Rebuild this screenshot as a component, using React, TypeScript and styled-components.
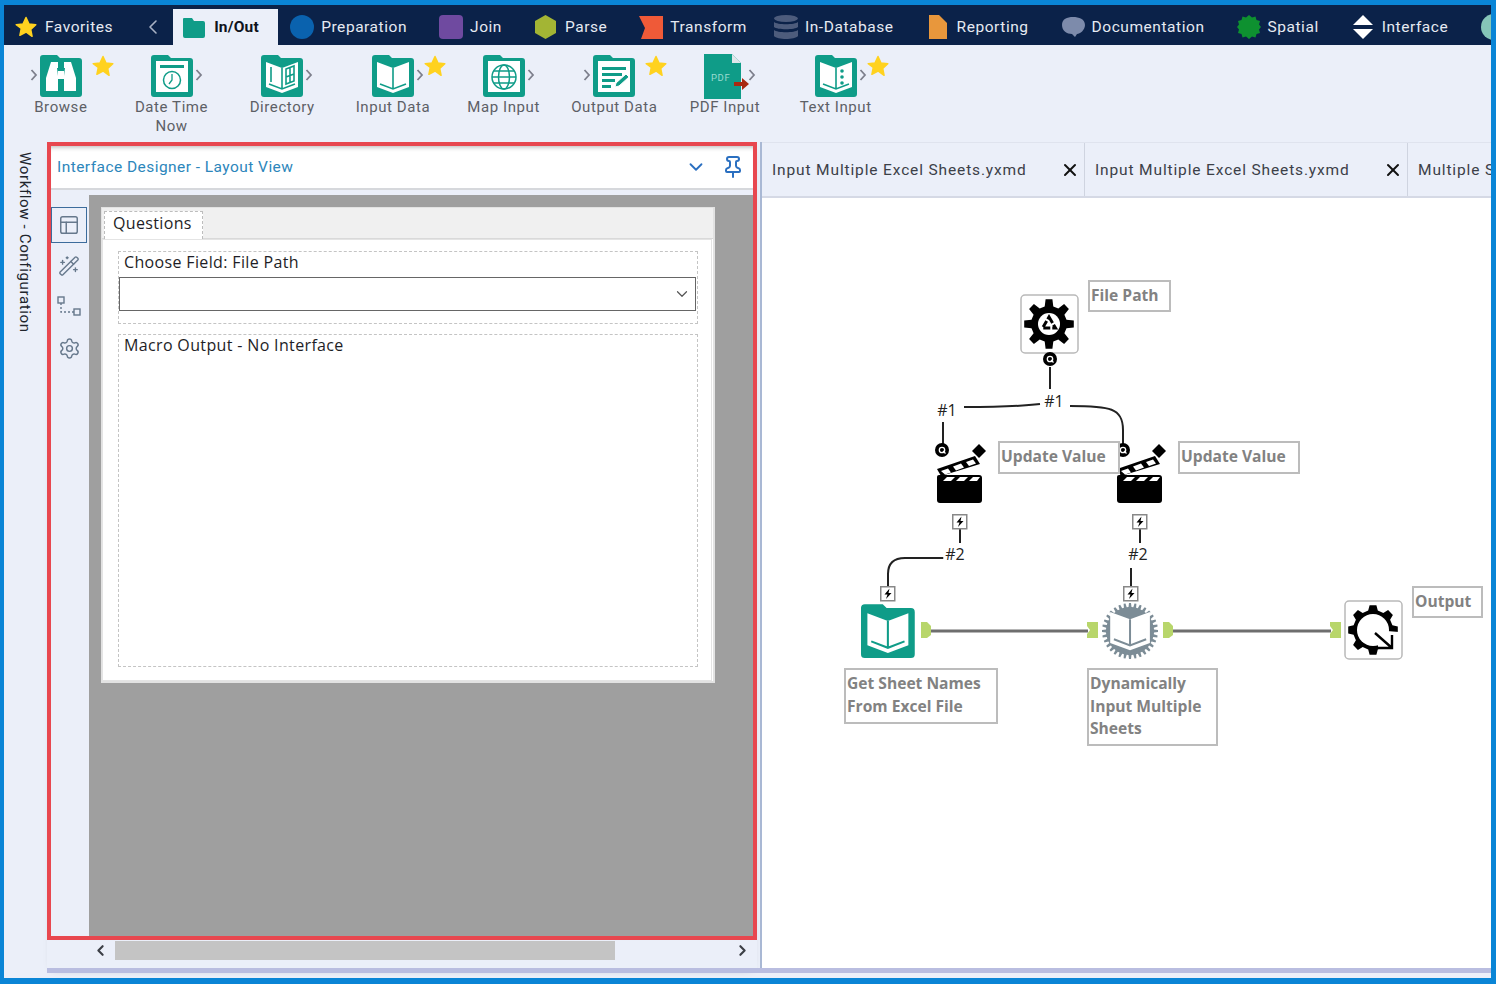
import React from "react";
import styled, { createGlobalStyle } from "styled-components";
import { PanelsTopLeft, Settings, WandSparkles, ChevronDown, ChevronLeft, ChevronRight, Pin, X } from "lucide-react";

const GlobalStyle = createGlobalStyle`
  html, body { margin: 0; padding: 0; background: #fff; }
  * { box-sizing: border-box; }
`;

const Frame = styled.div`
  width: 1496px;
  height: 984px;
  border: 5px solid #0a85d6;
  border-bottom-width: 6px;
  border-left-width: 4px;
  background: #ebeff9;
  display: flex;
  flex-direction: column;
  overflow: hidden;
  font-family: Roboto, "Liberation Sans", sans-serif;
`;

const TopNav = styled.nav`
  height: 40px;
  flex: none;
  background: #0b2249;
  display: flex;
  align-items: flex-end;
  padding-left: 10px;
  overflow: hidden;
`;

const NavItem = styled.div<{ $gap?: number }>`
  height: 36px;
  flex: none;
  display: flex;
  align-items: center;
  gap: 7px;
  margin-right: ${(p) => p.$gap ?? 32}px;
  color: #e6eaf2;
  font-size: 15.5px;
  letter-spacing: 0.55px;
  white-space: nowrap;
`;

const ActiveNavItem = styled(NavItem)`
  background: #ebeff9;
  color: #10131c;
  font-weight: 700;
  width: 105px;
  padding-left: 9px;
  gap: 8px;
  margin-right: 12px;
  letter-spacing: 0.2px;
`;

const BackChevron = styled.div`
  width: 24px;
  flex: none;
  display: flex;
  justify-content: center;
  color: #a9b2c4;
  margin: 0 8px 0 28px;
  height: 36px;
  align-items: center;
`;

const Toolbar = styled.div`
  height: 97px;
  flex: none;
  display: flex;
  padding-left: 1.5px;
`;

const Tool = styled.div`
  width: 110.7px;
  padding-top: 9px;
  display: flex;
  flex-direction: column;
  align-items: center;
  color: #5d6066;
  font-size: 15px;
  line-height: 18.5px;
  letter-spacing: 0.58px;
  text-align: center;
`;

const ToolLabel = styled.span`
  display: block;
  max-width: 90px;
`;

const ToolGlyph = styled.div`
  position: relative;
  width: 42px;
  height: 43px;
  margin-bottom: 1px;
`;

const StarBadge = styled.div`
  position: absolute;
  left: 51px;
  top: 0;
  line-height: 0;
`;

const Anchor = styled.div<{ $side: "left" | "right" }>`
  position: absolute;
  top: 14px;
  ${(p) => (p.$side === "left" ? "left: -10px;" : "right: -10px;")}
  line-height: 0;
  color: #7d7f8c;
`;

const Main = styled.div`
  flex: 1;
  min-height: 0;
  display: flex;
`;

const LeftRail = styled.div`
  width: 43px;
  flex: none;
  padding: 10px 0 0 12px;
`;

const RailLabel = styled.div`
  writing-mode: vertical-rl;
  font-size: 15px;
  letter-spacing: 0.65px;
  color: #20242c;
  white-space: nowrap;
`;

const Workspace = styled.div`
  flex: 1;
  min-width: 0;
  display: flex;
  flex-direction: column;
`;

const WorkRow = styled.div`
  flex: 1;
  min-height: 0;
  display: flex;
`;

const DesignerColumn = styled.div`
  width: 710px;
  flex: none;
  display: flex;
  flex-direction: column;
  box-shadow: 0 6px 8px -6px rgba(0, 0, 0, 0.35);
`;

const Divider = styled.div`
  width: 5px;
  flex: none;
  border-right: 2px solid #a9b8d4;
`;

const RedPanel = styled.section`
  height: 798px;
  flex: none;
  border: 4px solid #e8474f;
  display: flex;
  flex-direction: column;
  background: #ebeff9;
`;

const PanelHeader = styled.header`
  height: 44px;
  flex: none;
  background: #fff;
  border-bottom: 2px solid #d6d8dc;
  box-shadow: inset 0 5px 5px -4px rgba(0, 0, 0, 0.3);
  display: flex;
  align-items: center;
  padding: 0 6px;
  color: #2c86bb;
  font-size: 15.5px;
  letter-spacing: 0.45px;
`;

const PanelTitle = styled.div`
  flex: 1;
`;

const HeaderIcons = styled.div`
  display: flex;
  align-items: center;
  gap: 14px;
  color: #2a6fc0;
  padding-right: 2px;
`;

const PanelBody = styled.div`
  flex: 1;
  min-height: 0;
  display: flex;
  padding-top: 5px;
`;

const SideIcons = styled.div`
  width: 38px;
  flex: none;
  display: flex;
  flex-direction: column;
  align-items: center;
  padding-top: 12px;
  padding-right: 2px;
  gap: 5px;
  color: #66788c;
`;

const SideButton = styled.div<{ $active?: boolean }>`
  width: 36px;
  height: 36px;
  display: flex;
  align-items: center;
  justify-content: center;
  border: 1px solid ${(p) => (p.$active ? "#3c6c9c" : "transparent")};
`;

const GreyStage = styled.div`
  flex: 1;
  background: #9f9f9f;
  padding: 12px 38px 0 12px;
`;

const FormCard = styled.div`
  height: 476px;
  background: #fff;
  border: 1px solid #e2e2e2;
  border-right-width: 2px;
  border-bottom-width: 2px;
  display: flex;
  flex-direction: column;
  font-family: "Open Sans", "Noto Sans", sans-serif;
  font-size: 16px;
  letter-spacing: 0.35px;
  color: #1e1e26;
`;

const TabStrip = styled.div`
  height: 31px;
  flex: none;
  background: #f0f0f0;
  border-bottom: 1px solid #d9d9d9;
  padding: 3px 0 0 2px;
`;

const QuestionTab = styled.div`
  width: 99px;
  height: 28px;
  background: #fff;
  border: 1px dashed #bdbdbd;
  border-bottom: none;
  padding-left: 8px;
  line-height: 22px;
`;

const FormBody = styled.div`
  flex: 1;
  border: 1px solid #e4e4e4;
  margin-right: 1px;
  padding: 11px 13px 13px 15px;
  display: flex;
  flex-direction: column;
  gap: 10px;
`;

const DashedGroup = styled.div<{ $grow?: boolean }>`
  border: 1px dashed #c4c4c4;
  ${(p) => (p.$grow ? "flex: 1;" : "height: 73px;")}
`;

const GroupLabel = styled.div`
  padding-left: 5px;
  height: 25px;
  line-height: 21px;
`;

const SelectBox = styled.div`
  height: 34px;
  margin: 0 1px 0 0;
  border: 1.5px solid #666;
  display: flex;
  align-items: center;
  justify-content: flex-end;
  padding-right: 4px;
  color: #555;
`;

const ScrollRow = styled.div`
  height: 20px;
  flex: none;
  display: flex;
  align-items: center;
  padding-left: 45px;
  color: #3c3f46;
`;

const ScrollThumb = styled.div`
  width: 500px;
  height: 19px;
  background: #c4c4c4;
  margin-left: 6px;
  margin-right: 119px;
`;

const CanvasColumn = styled.div`
  flex: 1;
  min-width: 0;
  display: flex;
  flex-direction: column;
`;

const DocTabs = styled.div`
  height: 56px;
  flex: none;
  display: flex;
  border-bottom: 2px solid #d5d9e5;
  border-top: 1px solid #dfe3ee;
  overflow: hidden;
  font-size: 15.5px;
  letter-spacing: 0.86px;
`;

const DocTab = styled.div`
  width: 323px;
  flex: none;
  display: flex;
  align-items: center;
  justify-content: space-between;
  padding: 0 4px 0 10px;
  border-right: 1px solid #cfd4e0;
  white-space: nowrap;
  color: #3c4048;
`;

const LastDocTab = styled(DocTab)`
  width: 83px;
  border-right: none;
  padding-right: 0;
`;

const Canvas = styled.div`
  position: relative;
  flex: 1;
  background: #fff;
  overflow: hidden;
`;

const Wires = styled.svg`
  position: absolute;
  left: 0;
  top: 0;
`;

const Note = styled.div<{ $x: number; $y: number; $w: number; $h: number }>`
  position: absolute;
  left: ${(p) => p.$x - 762}px;
  top: ${(p) => p.$y - 198}px;
  width: ${(p) => p.$w}px;
  height: ${(p) => p.$h}px;
  background: #fff;
  border: 2px solid #bcbcbc;
  padding: 2px 0 0 1px;
  color: #828282;
  font-family: "Open Sans", "Noto Sans", sans-serif;
  font-weight: 700;
  font-size: 15.6px;
  line-height: 22.5px;
`;

const WireTag = styled.div<{ $x: number; $y: number }>`
  position: absolute;
  left: ${(p) => p.$x - 762}px;
  top: ${(p) => p.$y - 198}px;
  transform: translate(-50%, -50%);
  font-family: "Open Sans", "Noto Sans", sans-serif;
  font-size: 16px;
  color: #222;
  background: #fff;
  padding: 0 2px;
`;

const StatusBar = styled.div`
  height: 10px;
  flex: none;
  border-top: 5px solid #b9bde0;
`;

const TEAL = "#0f9c88";
const FOLDER = "M3 1h14l3 3h19a3 3 0 013 3v33a3 3 0 01-3 3H3a3 3 0 01-3-3V4a3 3 0 013-3z";

function Star({ size = 24 }: { size?: number }) {
  return (
    <svg width={size} height={size} viewBox="0 0 24 24">
      <path
        d="M12 2.5l2.9 6.4 6.9.8-5.1 4.700 1.400 6.900L12 17l-6.100 3.300 1.400-6.900L2.200 9.700l6.900-.8z"
        fill="#ffd21f"
        stroke="#ffd21f"
        strokeWidth="1.500"
        strokeLinejoin="round"
      />
    </svg>
  );
}

function Book({ line = TEAL, children }: { line?: string; children?: React.ReactNode }) {
  return (
    <g>
      <path d="M5 8l16 6 16-6v25l-16 6-16-6z" fill="#fff" />
      <path d="M21 14v20M8 30l13 5 13-5" fill="none" stroke={line} strokeWidth="1.600" />
      {children}
    </g>
  );
}

function ToolIcon({ kind }: { kind: string }) {
  if (kind === "pdf") {
    return (
      <svg width="48" height="46" viewBox="0 0 48 46">
        <path d="M0 0h28l9 9v36H0z" fill={TEAL} />
        <path d="M28 0l9 9h-9z" fill="#dfe6ea" />
        <text x="7" y="27" fontSize="9.500" fill="#9adbd0" fontFamily="Roboto, sans-serif">PDF</text>
        <path d="M30 28h8v-4l7 6-7 6v-4h-8z" fill="#a82a10" />
      </svg>
    );
  }
  return (
    <svg width="42" height="44" viewBox="0 0 42 44">
      <path d={FOLDER} fill={TEAL} />
      {kind === "browse" && (
        <g fill="#fff">
          <path d="M11 8h7v6h-1l1 8v15H6V24z" />
          <path d="M31 8h-7v6h1l-1 8v15h12V24z" />
          <rect x="18" y="17" width="6" height="8" />
        </g>
      )}
      {kind === "date" && (
        <g>
          <rect x="5" y="7" width="32" height="31" fill="#fff" />
          <rect x="9" y="11" width="24" height="3" fill={TEAL} />
          <circle cx="21" cy="26" r="8.500" fill="none" stroke={TEAL} strokeWidth="1.500" />
          <path d="M21 20v6l-3 4" fill="none" stroke={TEAL} strokeWidth="1.300" />
        </g>
      )}
      {kind === "directory" && (
        <Book>
          <path d="M10 13v15M25 15l8-3v15l-8 3zM29 13v16M25 23l8-3" fill="none" stroke={TEAL} strokeWidth="1.600" />
        </Book>
      )}
      {kind === "input" && <Book />}
      {kind === "map" && (
        <g>
          <rect x="5" y="7" width="32" height="31" fill="#fff" />
          <g fill="none" stroke={TEAL} strokeWidth="1.500">
            <circle cx="21" cy="23" r="12" />
            <ellipse cx="21" cy="23" rx="5.500" ry="12" />
            <path d="M9 23h24M11 17h20M11 29h20" />
          </g>
        </g>
      )}
      {kind === "output" && (
        <g>
          <rect x="5" y="7" width="32" height="31" fill="#fff" />
          <path d="M9 13h24v3H9zM9 19h20v3H9zM9 25h13v3H9zM9 31h9v3H9z" fill={TEAL} />
          <path d="M22 33l1-4 10-9 3 3-10 9z" fill={TEAL} stroke="#fff" strokeWidth="1" />
        </g>
      )}
      {kind === "text" && (
        <Book>
          <g fill={TEAL}>
            <circle cx="27" cy="17" r="1.800" />
            <circle cx="27" cy="23" r="1.800" />
            <circle cx="27" cy="29" r="1.800" />
          </g>
        </Book>
      )}
    </svg>
  );
}

function Caret() {
  return (
    <svg width="8" height="14" viewBox="0 0 8 14">
      <path d="M1.500 2l4.500 5-4.500 5" fill="none" stroke="currentColor" strokeWidth="1.800" />
    </svg>
  );
}

function NavShape({ kind }: { kind: string }) {
  return (
    <svg width="24" height="26" viewBox="0 0 24 26">
      {kind === "folder" && (
        <path d="M2 4h8l2 3h9a2 2 0 012 2v13a2 2 0 01-2 2H3a2 2 0 01-2-2V5a1 1 0 011-1z" fill={TEAL} />
      )}
      {kind === "prep" && <circle cx="12" cy="13" r="12" fill="#0a62ae" />}
      {kind === "join" && <rect x="0" y="1" width="24" height="24" rx="4" fill="#6f4aa0" />}
      {kind === "parse" && <path d="M11.500 1l10.500 6v12l-10.500 6L1 19V7z" fill="#a3b534" />}
      {kind === "transform" && <path d="M0 2h24v23H2l4-11z" fill="#ef5a38" />}
      {kind === "db" && (
        <g fill="#4d5c7c">
          <ellipse cx="12" cy="4.500" rx="12" ry="3.500" />
          <path d="M0 8c3 3 21 3 24 0v5c-3 3-21 3-24 0z" />
          <path d="M0 16c3 3 21 3 24 0v6c-3 4-21 4-24 0z" />
        </g>
      )}
      {kind === "report" && <path d="M3 1h10l8 8v16H3z" fill="#e8973c" />}
      {kind === "docs" && (
        <path d="M1 11C1 5 6 3 12 3s12 2 12 8c0 5-5 9-8 9l-2 3-3-3C6 20 1 17 1 11z" fill="#7d8bab" />
      )}
      {kind === "spatial" && (
        <path
          d="M12 1l3 2.500 3.500-1 1 3.500 3.500 1-1 3.500L24 13l-2 2.500 1 3.500-3.500 1-1 3.500-3.500-1-3 2.500-3-2.500-3.500 1-1-3.500L1 19l1-3.500L0 13l2-2.500-1-3.500 3.500-1 1-3.500 3.500 1z"
          fill="#0e9130"
        />
      )}
      {kind === "iface" && (
        <g fill="#fff">
          <path d="M12 1l10 10H2z" />
          <path d="M12 25L2 15h20z" />
        </g>
      )}
      {kind === "more" && <circle cx="14" cy="13" r="13" fill="#86c6b8" />}
    </svg>
  );
}

const navItems = [
  { kind: "prep", label: "Preparation" },
  { kind: "join", label: "Join" },
  { kind: "parse", label: "Parse" },
  { kind: "transform", label: "Transform", gap: 27 },
  { kind: "db", label: "In-Database" },
  { kind: "report", label: "Reporting" },
  { kind: "docs", label: "Documentation" },
  { kind: "spatial", label: "Spatial" },
  { kind: "iface", label: "Interface" },
  { kind: "more", label: "" },
];

const tools = [
  { kind: "browse", label: "Browse", side: "left", star: true },
  { kind: "date", label: "Date Time Now", side: "right", star: false },
  { kind: "directory", label: "Directory", side: "right", star: false },
  { kind: "input", label: "Input Data", side: "right", star: true },
  { kind: "map", label: "Map Input", side: "right", star: false },
  { kind: "output", label: "Output Data", side: "left", star: true },
  { kind: "pdf", label: "PDF Input", side: "right", star: false },
  { kind: "text", label: "Text Input", side: "right", star: true },
] as const;

function gearPath(cx: number, cy: number, ro: number, ri: number, teeth: number) {
  const pts: string[] = [];
  const step = (Math.PI * 2) / teeth;
  for (let i = 0; i < teeth; i++) {
    const a = i * step - Math.PI / 2;
    const w = step * 0.22;
    [
      [ri, a - w * 1.4],
      [ro, a - w * 0.8],
      [ro, a + w * 0.8],
      [ri, a + w * 1.4],
    ].forEach(([r, t]) => pts.push(`${(cx + r * Math.cos(t)).toFixed(1)} ${(cy + r * Math.sin(t)).toFixed(1)}`));
  }
  return `M${pts.join("L")}Z`;
}

function Clapper({ x }: { x: number }) {
  return (
    <g transform={`translate(${x} 448)`}>
      <path d="M43-4l7 7-7 7-7-7z" fill="#000" />
      <path d="M3 27h40a3 3 0 013 3v22a3 3 0 01-3 3H4a3 3 0 01-3-3V29a2 2 0 012-2z" fill="#000" />
      <path d="M7 33l4-4h8l-4 4zM20 33l4-4h8l-4 4zM33 33l4-4h7l-3 4z" fill="#fff" />
      <path d="M1 21L39 8l5 8L5 28z" fill="#000" />
      <path d="M5 23l7-2.500 3 4-6 2zM17 18.500l8-3 3 4-8 3zM30 14l7-2.500 3 4-7 2.500z" fill="#fff" />
    </g>
  );
}

function Bolt({ x, y }: { x: number; y: number }) {
  return (
    <g transform={`translate(${x} ${y})`}>
      <rect x="0.750" y="0.750" width="14" height="14" fill="#fff" stroke="#888" strokeWidth="1.500" />
      <path d="M9.500 2.500L4.500 8.500h3L6 13l5.500-6h-3z" fill="#000" />
    </g>
  );
}

function QDot({ x, y }: { x: number; y: number }) {
  return (
    <g>
      <circle cx={x} cy={y} r="7" fill="#000" />
      <circle cx={x} cy={y} r="2.700" fill="none" stroke="#fff" strokeWidth="1.300" />
      <path d={`M${x + 1} ${y + 1}l2.500 2.500`} stroke="#fff" strokeWidth="1.200" />
    </g>
  );
}

function OutPort({ x }: { x: number }) {
  return <path d={`M${x} 622h6l4 4v9l-4 3h-6z`} fill="#b8d66b" />;
}

function InPort({ x }: { x: number }) {
  return <path d={`M${x} 622h11v16h-11v-4l3-4-3-4z`} fill="#b8d66b" />;
}

export default function App() {
  return (
    <>
      <GlobalStyle />
      <Frame>
        <TopNav>
          <NavItem $gap={0}>
            <Star size={24} />
            <span>Favorites</span>
          </NavItem>
          <BackChevron>
            <ChevronLeft size={28} strokeWidth={1.6} />
          </BackChevron>
          <ActiveNavItem>
            <NavShape kind="folder" />
            <span>In/Out</span>
          </ActiveNavItem>
          {navItems.map((item) => (
            <NavItem key={item.kind} $gap={item.gap}>
              <NavShape kind={item.kind} />
              {item.label && <span>{item.label}</span>}
            </NavItem>
          ))}
        </TopNav>

        <Toolbar>
          {tools.map((tool) => (
            <Tool key={tool.kind}>
              <ToolGlyph>
                <ToolIcon kind={tool.kind} />
                <Anchor $side={tool.side}>
                  <Caret />
                </Anchor>
                {tool.star && (
                  <StarBadge>
                    <Star />
                  </StarBadge>
                )}
              </ToolGlyph>
              <ToolLabel>{tool.label}</ToolLabel>
            </Tool>
          ))}
        </Toolbar>

        <Main>
          <LeftRail>
            <RailLabel>Workflow - Configuration</RailLabel>
          </LeftRail>
          <Workspace>
            <WorkRow>
              <DesignerColumn>
                <RedPanel>
                  <PanelHeader>
                    <PanelTitle>Interface Designer - Layout View</PanelTitle>
                    <HeaderIcons>
                      <ChevronDown size={22} strokeWidth={2} />
                      <Pin size={24} strokeWidth={2} />
                    </HeaderIcons>
                  </PanelHeader>
                  <PanelBody>
                    <SideIcons>
                      <SideButton $active>
                        <PanelsTopLeft size={22} strokeWidth={1.6} />
                      </SideButton>
                      <SideButton>
                        <WandSparkles size={22} strokeWidth={1.5} />
                      </SideButton>
                      <SideButton>
                        <svg width="24" height="24" viewBox="0 0 24 24" fill="none" stroke="currentColor" strokeWidth="1.400">
                          <rect x="1" y="2" width="6" height="6" />
                          <rect x="17" y="14" width="6" height="6" />
                          <path d="M4 8v9h13" strokeDasharray="2 2" />
                        </svg>
                      </SideButton>
                      <SideButton>
                        <Settings size={23} strokeWidth={1.5} />
                      </SideButton>
                    </SideIcons>
                    <GreyStage>
                      <FormCard>
                        <TabStrip>
                          <QuestionTab>Questions</QuestionTab>
                        </TabStrip>
                        <FormBody>
                          <DashedGroup>
                            <GroupLabel>Choose Field: File Path</GroupLabel>
                            <SelectBox>
                              <ChevronDown size={18} strokeWidth={1.6} />
                            </SelectBox>
                          </DashedGroup>
                          <DashedGroup $grow>
                            <GroupLabel>Macro Output - No Interface</GroupLabel>
                          </DashedGroup>
                        </FormBody>
                      </FormCard>
                    </GreyStage>
                  </PanelBody>
                </RedPanel>
                <ScrollRow>
                  <ChevronLeft size={17} strokeWidth={3} />
                  <ScrollThumb />
                  <ChevronRight size={17} strokeWidth={3} />
                </ScrollRow>
              </DesignerColumn>
              <Divider />
              <CanvasColumn>
                <DocTabs>
                  <DocTab>
                    <span>Input Multiple Excel Sheets.yxmd</span>
                    <X size={20} strokeWidth={2.4} color="#111" />
                  </DocTab>
                  <DocTab>
                    <span>Input Multiple Excel Sheets.yxmd</span>
                    <X size={20} strokeWidth={2.4} color="#111" />
                  </DocTab>
                  <LastDocTab>
                    <span>Multiple S</span>
                  </LastDocTab>
                </DocTabs>
                <Canvas>
                  <Wires width="729" height="770" viewBox="762 198 729 770">
                    <g fill="none" stroke="#222" strokeWidth="2">
                      <path d="M1050 367v22" />
                      <path d="M964 407c30 0 50 0 76-3" />
                      <path d="M943 422v24" />
                      <path d="M1070 406c40 0 53 2 53 24v14" />
                      <path d="M960 529v14" />
                      <path d="M945 558h-40c-12 0-17 6-17 16v13" />
                      <path d="M1140 529v14" />
                      <path d="M1131 568v20" />
                    </g>
                    <path d="M931 631h157M1173 631h158" stroke="#6e6e6e" strokeWidth="3" />

                    <rect x="1021" y="295" width="57" height="58" rx="4" fill="#fff" stroke="#b9b9b9" strokeWidth="1.500" />
                    <path d={gearPath(1049, 324, 25, 18, 8)} fill="#000" />
                    <circle cx="1049" cy="324" r="11" fill="#fff" />
                    <path d="M1049 317l6.500 11h-13z" fill="none" stroke="#000" strokeWidth="3" strokeDasharray="7 2" />
                    <QDot x={1050} y={359} />

                    <QDot x={942} y={450} />
                    <QDot x={1123} y={450} />
                    <Clapper x={936} />
                    <Clapper x={1116} />
                    <Bolt x={952} y={514} />
                    <Bolt x={1132} y={514} />
                    <Bolt x={880} y={586} />
                    <Bolt x={1123} y={586} />

                    <g transform="translate(861 603) scale(1.280)">
                      <path d={FOLDER} fill={TEAL} />
                      <Book />
                    </g>
                    <OutPort x={921} />
                    <InPort x={1087} />

                    <path d={gearPath(1130, 631, 28, 24, 32)} fill="#7c8c96" />
                    <g transform="translate(1104 602) scale(1.240)">
                      <Book line="#7c8c96" />
                    </g>
                    <OutPort x={1163} />
                    <InPort x={1330} />

                    <rect x="1345" y="601" width="57" height="58" rx="4" fill="#fff" stroke="#b9b9b9" strokeWidth="1.500" />
                    <path d={gearPath(1373, 630, 25, 20, 8)} fill="#000" />
                    <circle cx="1373" cy="630" r="16" fill="#fff" />
                    <path d="M1375 630L1399 632V657H1380z" fill="#fff" />
                    <path d="M1375 633l17 15M1392 635v13h-14" fill="none" stroke="#000" strokeWidth="2.400" />
                  </Wires>

                  <Note $x={1088} $y={280} $w={83} $h={32}>File Path</Note>
                  <Note $x={998} $y={441} $w={122} $h={33}>Update Value</Note>
                  <Note $x={1178} $y={441} $w={122} $h={33}>Update Value</Note>
                  <Note $x={844} $y={668} $w={154} $h={56}>Get Sheet Names<br />From Excel File</Note>
                  <Note $x={1087} $y={668} $w={131} $h={78}>Dynamically<br />Input Multiple<br />Sheets</Note>
                  <Note $x={1412} $y={586} $w={71} $h={32}>Output</Note>

                  <WireTag $x={1054} $y={401}>#1</WireTag>
                  <WireTag $x={947} $y={410}>#1</WireTag>
                  <WireTag $x={955} $y={554}>#2</WireTag>
                  <WireTag $x={1138} $y={554}>#2</WireTag>
                </Canvas>
              </CanvasColumn>
            </WorkRow>
            <StatusBar />
          </Workspace>
        </Main>
      </Frame>
    </>
  );
}
